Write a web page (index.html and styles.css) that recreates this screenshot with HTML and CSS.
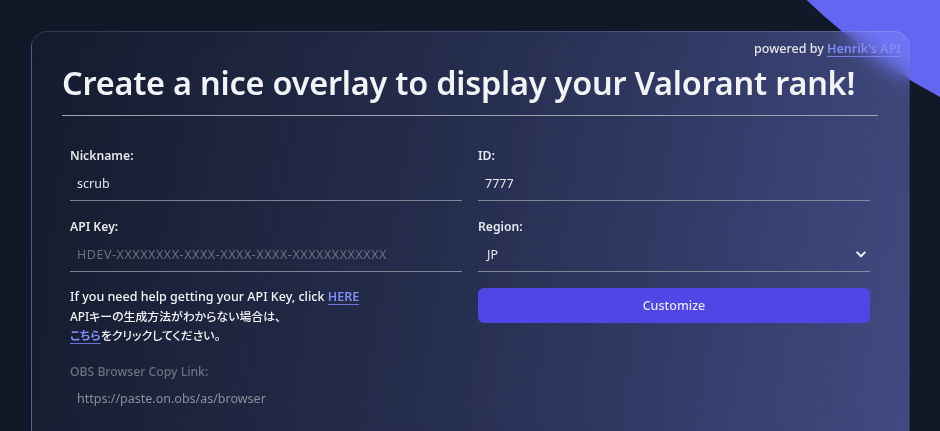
FILE: index.html
```html
<!DOCTYPE html>
<html lang="en">
<head>
<meta charset="utf-8">
<title>Valorant Rank Overlay</title>
<link rel="stylesheet" href="styles.css">
</head>
<body>
<div class="backdrop"><div class="blob"></div></div>
<main class="page">
  <section class="card">
    <p class="powered">powered by <a class="link" href="#">Henrik's API</a></p>
    <h1 class="title">Create a nice overlay to display your Valorant rank!</h1>
    <hr class="rule">
    <form class="form">
      <div class="field">
        <label class="label">Nickname:</label>
        <input class="input" type="text" value="scrub">
      </div>
      <div class="field">
        <label class="label">ID:</label>
        <input class="input" type="text" value="7777">
      </div>
      <div class="field">
        <label class="label">API Key:</label>
        <input class="input key" type="text" placeholder="HDEV-XXXXXXXX-XXXX-XXXX-XXXX-XXXXXXXXXXXX">
      </div>
      <div class="field">
        <label class="label">Region:</label>
        <div class="input select">
          <span>JP</span>
          <svg class="chevron" width="10" height="7" viewBox="0 0 10 7"><path d="M1.2 1.4 5 5.2 8.8 1.4" fill="none" stroke="#f3f4f6" stroke-width="2" stroke-linecap="round" stroke-linejoin="round"/></svg>
        </div>
      </div>
      <p class="help">If you need help getting your API Key, click <a class="link" href="#">HERE</a><br><span class="ja">APIキーの生成方法がわからない場合は、<br><a class="link" href="#">こちら</a>をクリックしてください。</span></p>
      <button class="btn" type="button">Customize</button>
      <div class="field muted">
        <label class="label">OBS Browser Copy Link:</label>
        <input class="input" type="text" value="https://paste.on.obs/as/browser">
      </div>
    </form>
  </section>
</main>
</body>
</html>
```
FILE: styles.css
```css
* { box-sizing: border-box; }
html, body { margin: 0; height: 100%; }
body {
  background: #111827;
  overflow: hidden;
  font-family: "Noto Sans", "Noto Sans CJK JP", sans-serif;
  color: #e5e7eb;
  position: relative;
}
.backdrop {
  position: absolute;
  inset: 0;
  overflow: hidden;
}
.blob {
  position: absolute;
  left: 623px;
  top: -1032px;
  width: 1200px;
  height: 1200px;
  border-radius: 50%;
  background: #6366f1;
}
.page {
  position: relative;
  z-index: 1;
  height: 431px;
  overflow: hidden;
  padding: 31px 30px 0 31px;
}
.card {
  position: relative;
  border: 1px solid rgba(255,255,255,0.13);
  border-radius: 16px;
  padding: 30px 31px 60px 30px;
  background: linear-gradient(100deg, rgba(129,140,248,0.03) 0%, rgba(129,140,248,0.20) 50%, rgba(129,140,248,0.44) 100%);
  backdrop-filter: blur(10px);
  -webkit-backdrop-filter: blur(10px);
  min-height: 460px;
}
.powered {
  position: absolute;
  top: 8px;
  right: 8px;
  margin: 0;
  font-size: 12.5px;
  line-height: 18px;
  font-weight: 500;
  color: #e5e7eb;
}
.link {
  color: #818cf8;
  text-decoration: underline;
  text-decoration-color: rgba(129,140,248,0.8);
  text-underline-offset: 3px;
  font-weight: 600;
}
.title {
  margin: 0;
  font-size: 32.4px;
  line-height: 40px;
  font-weight: 600;
  color: #f1f3f7;
  letter-spacing: -0.2px;
}
.rule {
  margin: 13px 0 0;
  border: 0;
  border-top: 1px solid #9ca3af;
}
.form {
  margin-top: 30px;
  padding: 0 8px;
  display: grid;
  grid-template-columns: 1fr 1fr;
  column-gap: 16px;
  row-gap: 16px;
  align-items: start;
}
.field { display: flex; flex-direction: column; }
.label {
  font-size: 12.2px;
  line-height: 20px;
  font-weight: 600;
  color: #e5e7eb;
}
.input {
  height: 35px;
  width: 100%;
  padding: 0 7px;
  border: 0;
  border-bottom: 1px solid rgba(156,163,175,0.75);
  background: transparent;
  font-family: inherit;
  font-size: 12.5px;
  color: #e5e7eb;
  outline: none;
}
.input::placeholder { color: #6b7280; }
.key::placeholder { letter-spacing: 0.55px; }
.select {
  display: flex;
  align-items: center;
  justify-content: space-between;
  padding: 0 4px 0 9px;
}
.chevron { display: block; }
.help {
  margin: 0;
  font-size: 12.5px;
  line-height: 18.5px;
  font-weight: 500;
  color: #f3f4f6;
}
.ja {
  font-feature-settings: "palt";
  font-size: 11.9px;
}
.btn {
  height: 35px;
  border: 0;
  border-radius: 6px;
  background: #4f46e5;
  color: #e0e7ff;
  font-family: inherit;
  font-size: 12.5px;
  font-weight: 500;
}
.muted .label { color: #6b7280; font-weight: 500; }
.muted .input { color: #8b909c; border-bottom-color: transparent; }
```
